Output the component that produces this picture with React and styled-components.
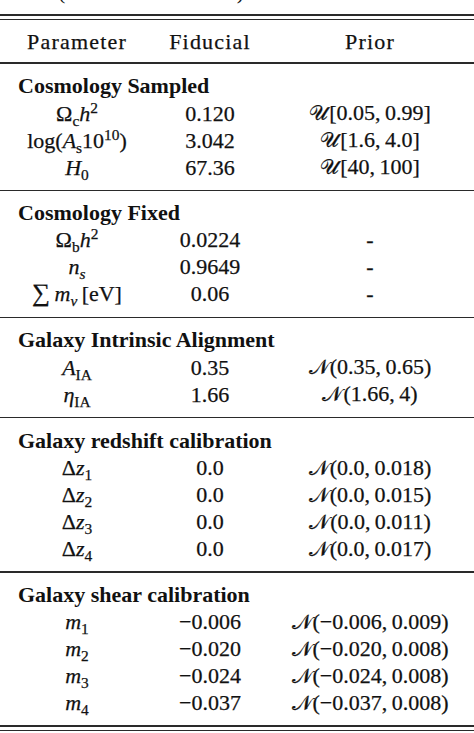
import styled, { createGlobalStyle } from "styled-components";

const GlobalStyle = createGlobalStyle`
  html, body {
    margin: 0;
    padding: 0;
    background: #fff;
  }
  body {
    font-family: "Liberation Serif", "DejaVu Serif", serif;
    color: #111;
    overflow: hidden;
  }
`;

const Page = styled.div`
  width: 474px;
  height: 733px;
  overflow: hidden;
  display: flex;
  flex-direction: column;
`;

// the caption above the table is cropped in the picture, only the paren tips show
const CaptionClip = styled.div`
  height: 15px;
  overflow: hidden;
  display: flex;
  align-items: flex-start;
`;

const CaptionLine = styled.div`
  display: flex;
  justify-content: space-between;
  width: 186px;
  margin-left: 58px;
  margin-top: -21px;
  font-size: 22px;
  line-height: normal;
`;

const Rule = styled.div`
  height: 1.3px;
  background: #2a2a2a;
  flex-shrink: 0;
  margin-top: ${(p) => p.gap || 0}px;
`;

const Row = styled.div`
  display: grid;
  grid-template-columns: 154px 112px 208px;
  height: ${(p) => p.h || 27}px;
  align-items: center;
  font-size: 22px;
  line-height: 27px;
  -webkit-text-stroke: 0.25px #111;
`;

const Cell = styled.div`
  text-align: center;
  white-space: nowrap;
  letter-spacing: ${(p) => (p.word ? "1.2px" : "0")};
`;

const Section = styled.div`
  padding: 8.3px 0 9.6px;
`;

const Heading = styled.div`
  height: 27px;
  line-height: 27px;
  padding-left: 18px;
  font-size: 22px;
  font-weight: bold;
  white-space: nowrap;
`;

const I = styled.i`
  font-style: italic;
`;

const Sub = styled.span`
  font-size: 0.7em;
  vertical-align: -0.3em;
  line-height: 0;
  font-style: ${(p) => (p.it ? "italic" : "normal")};
`;

const Sup = styled.span`
  font-size: 0.7em;
  vertical-align: 0.5em;
  line-height: 0;
`;

const Sum = styled.span`
  font-size: 1.15em;
  line-height: 0;
`;

const Cal = styled.span`
  font-family: "DejaVu Serif", "DejaVu Sans", "Noto Sans", serif;
  font-size: 0.95em;
  margin-right: 1px;
`;

const Footer = styled.div`
  flex: 1;
  background: #9a9a9a;
  margin-top: 2px;
`;

const sections = [
  {
    title: "Cosmology Sampled",
    rows: [
      [<><span>Ω</span><Sub>c</Sub><I>h</I><Sup>2</Sup></>, "0.120", <><Cal>𝒰</Cal>[0.05,{"\u2009"}0.99]</>],
      [<>log(<I>A</I><Sub>s</Sub>10<Sup>10</Sup>)</>, "3.042", <><Cal>𝒰</Cal>[1.6,{"\u2009"}4.0]</>],
      [<><I>H</I><Sub>0</Sub></>, "67.36", <><Cal>𝒰</Cal>[40,{"\u2009"}100]</>],
    ],
  },
  {
    title: "Cosmology Fixed",
    rows: [
      [<><span>Ω</span><Sub>b</Sub><I>h</I><Sup>2</Sup></>, "0.0224", "-"],
      [<><I>n</I><Sub it>s</Sub></>, "0.9649", "-"],
      [<><Sum>∑</Sum>{"\u2009"}<I>m</I><Sub it>ν</Sub>{"\u2009"}[eV]</>, "0.06", "-"],
    ],
  },
  {
    title: "Galaxy Intrinsic Alignment",
    rows: [
      [<><I>A</I><Sub>IA</Sub></>, "0.35", <><Cal>𝒩</Cal>(0.35,{"\u2009"}0.65)</>],
      [<><I>η</I><Sub>IA</Sub></>, "1.66", <><Cal>𝒩</Cal>(1.66,{"\u2009"}4)</>],
    ],
  },
  {
    title: "Galaxy redshift calibration",
    rows: [1, 2, 3, 4].map((n, i) => [
      <>Δ<I>z</I><Sub>{n}</Sub></>,
      "0.0",
      <><Cal>𝒩</Cal>(0.0,{"\u2009"}{["0.018", "0.015", "0.011", "0.017"][i]})</>,
    ]),
  },
  {
    title: "Galaxy shear calibration",
    rows: [
      ["0.006", "0.009"],
      ["0.020", "0.008"],
      ["0.024", "0.008"],
      ["0.037", "0.008"],
    ].map(([f, s], i) => [
      <><I>m</I><Sub>{i + 1}</Sub></>,
      `\u2212${f}`,
      <><Cal>𝒩</Cal>(−{f},{"\u2009"}{s})</>,
    ]),
  },
];

export default function App() {
  return (
    <Page>
      <GlobalStyle />
      <CaptionClip>
        <CaptionLine>
          <span>(</span>
          <span>)</span>
        </CaptionLine>
      </CaptionClip>
      <Rule />
      <Rule gap={3} />
      <Row h={44}>
        <Cell word>Parameter</Cell>
        <Cell word>Fiducial</Cell>
        <Cell word>Prior</Cell>
      </Row>
      {sections.map((sec) => (
        <div key={sec.title}>
          <Rule />
          <Section>
            <Heading>{sec.title}</Heading>
            {sec.rows.map((r, ri) => (
              <Row key={ri}>
                <Cell>{r[0]}</Cell>
                <Cell>{r[1]}</Cell>
                <Cell>{r[2]}</Cell>
              </Row>
            ))}
          </Section>
        </div>
      ))}
      <Rule />
      <Rule gap={3} />
      <Footer />
    </Page>
  );
}
